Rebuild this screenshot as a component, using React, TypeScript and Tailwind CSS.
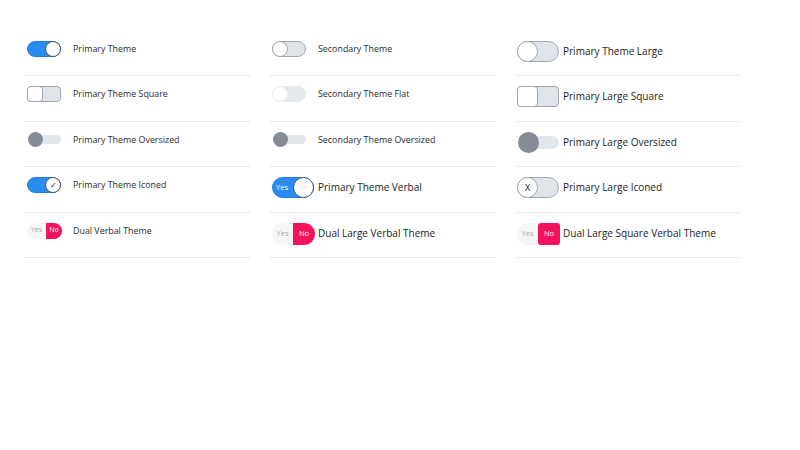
import React from 'react';

const BLUE = 'bg-[#2a8cf0] border-[#1f7fe0]';

function Row({ toggle, label, large }: { toggle: React.ReactNode; label: string; large?: boolean }) {
  return (
    <div className="box-border h-[45.5px] border-b border-[#e7e7e7] pt-[10px] flex items-start">
      <div className="w-[48px] pl-[2px] shrink-0 flex items-start">{toggle}</div>
      <span
        className={
          large
            ? 'text-[10px] leading-[21px] text-[#222]'
            : 'text-[8.9px] leading-[16px] text-[#2b2b2b]'
        }
      >
        {label}
      </span>
    </div>
  );
}

// small (34x16) and large (42x21) round / square tracks
function Track({
  large,
  on,
  square,
  flat,
  children,
}: {
  large?: boolean;
  on?: boolean;
  square?: boolean;
  flat?: boolean;
  children?: React.ReactNode;
}) {
  const size = large ? 'w-[42px] h-[21px]' : 'w-[34px] h-[16px]';
  const shape = square ? 'rounded-[4px]' : 'rounded-full';
  const color = on
    ? `${BLUE} border`
    : flat
    ? 'bg-[#e4e8ed] border border-[#e4e8ed]'
    : 'bg-[#dfe4ea] border border-[#a3a7ac]';
  return <div className={`relative box-border ${size} ${shape} ${color}`}>{children}</div>;
}

function Knob({
  large,
  on,
  square,
  flat,
  children,
}: {
  large?: boolean;
  on?: boolean;
  square?: boolean;
  flat?: boolean;
  children?: React.ReactNode;
}) {
  const size = large ? 'w-[21px] h-[21px]' : 'w-[16px] h-[16px]';
  const shape = square ? 'rounded-[4px]' : 'rounded-full';
  const side = on ? 'right-[-1px]' : 'left-[-1px]';
  const border = flat ? 'border-[#eceff2]' : on ? 'border-[#50565e]' : 'border-[#a3a7ac]';
  return (
    <span
      className={`absolute top-[-1px] ${side} box-border ${size} ${shape} bg-white border ${border} flex items-center justify-center`}
    >
      {children}
    </span>
  );
}

function Oversized({ large }: { large?: boolean }) {
  return large ? (
    <div className="relative w-[42px] h-[21px] flex items-center">
      <div className="ml-[2px] w-[40px] h-[13px] rounded-full bg-[#e2e7ed]" />
      <span className="absolute left-[1px] top-0 w-[21px] h-[21px] rounded-full bg-[#858c96]" />
    </div>
  ) : (
    <div className="relative w-[34px] h-[16px] flex items-center">
      <div className="ml-[2px] w-[32px] h-[9px] rounded-full bg-[#e2e7ed]" />
      <span className="absolute left-[1px] top-[0.5px] w-[15px] h-[15px] rounded-full bg-[#858c96]" />
    </div>
  );
}

function Dual({ large, square }: { large?: boolean; square?: boolean }) {
  const h = large ? 'h-[22px]' : 'h-[16px]';
  const yesW = large ? 'w-[21px]' : 'w-[19px]';
  const noW = large ? 'w-[22px]' : 'w-[16px]';
  const txt = large ? 'text-[7.5px]' : 'text-[7px]';
  const noShape = square ? 'rounded-[3px]' : 'rounded-l-[2px] rounded-r-full';
  return (
    <div className={`flex ${h}`}>
      <span
        className={`${yesW} ${h} ${txt} bg-[#f6f6f7] rounded-l-full text-[#a6a8ab] flex items-center justify-center`}
      >
        Yes
      </span>
      <span className={`${noW} ${h} ${txt} bg-[#f3125e] text-white ${noShape} flex items-center justify-center`}>
        No
      </span>
    </div>
  );
}

export default function App() {
  return (
    <div className="w-[800px] h-[450px] bg-white font-['Open_Sans',sans-serif] pl-[25px] pt-[30.5px] flex gap-[20px] items-start">
      {/* column 1 */}
      <div className="w-[225px] flex flex-col">
        <Row
          label="Primary Theme"
          toggle={
            <Track on>
              <Knob on />
            </Track>
          }
        />
        <Row
          label="Primary Theme Square"
          toggle={
            <Track square>
              <Knob square />
            </Track>
          }
        />
        <Row label="Primary Theme Oversized" toggle={<Oversized />} />
        <Row
          label="Primary Theme Iconed"
          toggle={
            <Track on>
              <Knob on>
                <span className="text-[8px] leading-none text-[#222]">✓</span>
              </Knob>
            </Track>
          }
        />
        <Row label="Dual Verbal Theme" toggle={<Dual />} />
      </div>

      {/* column 2 */}
      <div className="w-[225px] flex flex-col">
        <Row
          label="Secondary Theme"
          toggle={
            <Track>
              <Knob />
            </Track>
          }
        />
        <Row
          label="Secondary Theme Flat"
          toggle={
            <Track flat>
              <Knob flat />
            </Track>
          }
        />
        <Row label="Secondary Theme Oversized" toggle={<Oversized />} />
        <Row
          large
          label="Primary Theme Verbal"
          toggle={
            <Track large on>
              <span className="absolute left-[3px] top-0 h-full flex items-center text-[7.5px] text-white">Yes</span>
              <Knob large on>
                <span className="text-[7px] text-[#e4e6e9]">No</span>
              </Knob>
            </Track>
          }
        />
        <Row large label="Dual Large Verbal Theme" toggle={<Dual large />} />
      </div>

      {/* column 3 */}
      <div className="w-[225px] flex flex-col">
        <Row
          large
          label="Primary Theme Large"
          toggle={
            <Track large>
              <Knob large />
            </Track>
          }
        />
        <Row
          large
          label="Primary Large Square"
          toggle={
            <Track large square>
              <Knob large square />
            </Track>
          }
        />
        <Row large label="Primary Large Oversized" toggle={<Oversized large />} />
        <Row
          large
          label="Primary Large Iconed"
          toggle={
            <Track large>
              <Knob large>
                <span className="text-[9px] leading-none text-[#222]">X</span>
              </Knob>
            </Track>
          }
        />
        <Row large label="Dual Large Square Verbal Theme" toggle={<Dual large square />} />
      </div>
    </div>
  );
}
